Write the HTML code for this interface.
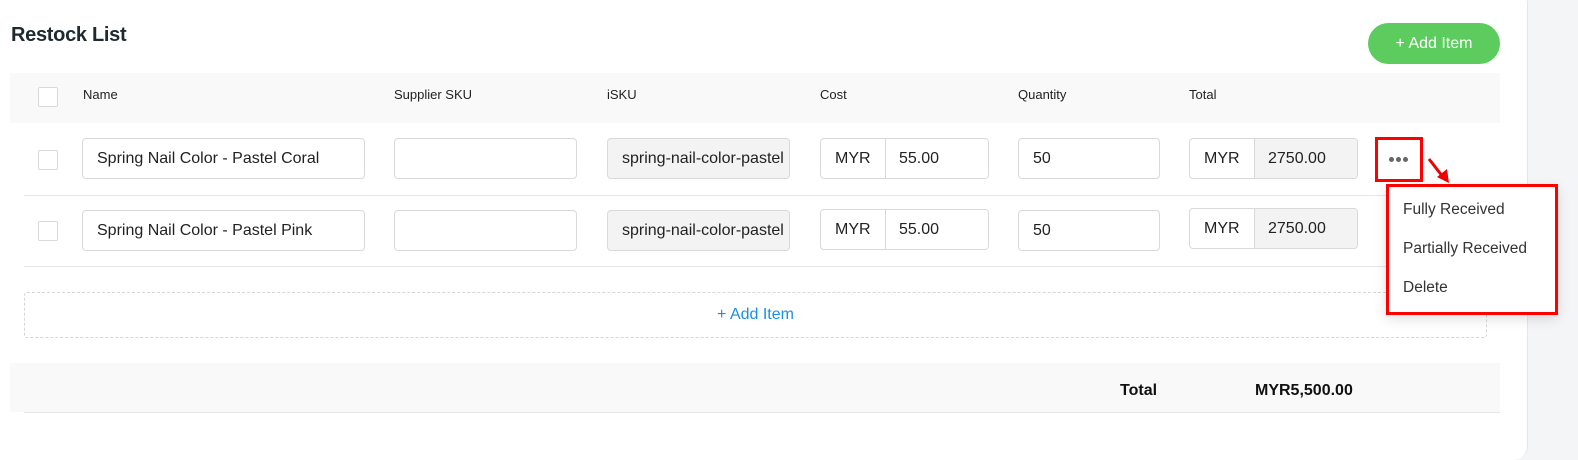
<!DOCTYPE html><html><head><style>
*{box-sizing:border-box;margin:0;padding:0}
body{width:1578px;height:445px;background:#f4f5f7;font-family:"Liberation Sans",sans-serif;position:relative;overflow:hidden;color:#222}
.a{position:absolute}
.card{left:0;top:-10px;width:1528px;height:470px;background:#fff;border-radius:0 14px 14px 0;border-right:1px solid #e6e6e6}
.th{font-size:13px;color:#222;top:87px}
.cb{width:20px;height:20px;border:1px solid #d9d9d9;border-radius:2px;background:#fff}
.in{height:41px;border:1px solid #d9d9d9;border-radius:4px;background:#fff;font-size:16px;color:#222;line-height:39px;padding-left:14px;overflow:hidden;white-space:nowrap}
.g{background:#f3f3f3}
.sp{position:absolute;top:0;bottom:0;border-left:1px solid #d9d9d9;background:#f3f3f3;padding-left:13px}
.sp.w{background:#fff}
.hl{height:1px;background:#e6e6e6}
.mi{left:1403px;font-size:15.5px;color:#333}
.d{position:absolute;width:5px;height:5px;border-radius:50%;background:#666;top:157px}
</style></head><body>
<div class="a card"></div>
<div class="a" style="left:11px;top:24px;font-size:20px;font-weight:bold;color:#1e2a2e;letter-spacing:-0.3px">Restock List</div>
<div class="a" style="left:1368px;top:23px;width:132px;height:41px;border-radius:21px;background:#5bcc5d;color:#fff;font-size:16px;line-height:41px;text-align:center">+ Add Item</div>
<div class="a" style="left:10px;top:73px;width:1490px;height:50px;background:#f9f9f9"></div>
<div class="a cb" style="left:38px;top:87px"></div>
<div class="a th" style="left:83px">Name</div>
<div class="a th" style="left:394px">Supplier SKU</div>
<div class="a th" style="left:607px">iSKU</div>
<div class="a th" style="left:820px">Cost</div>
<div class="a th" style="left:1018px">Quantity</div>
<div class="a th" style="left:1189px">Total</div>

<div class="a cb" style="left:38px;top:150px"></div>
<div class="a in" style="left:82px;top:138px;width:283px">Spring Nail Color - Pastel Coral</div>
<div class="a in" style="left:394px;top:138px;width:183px"></div>
<div class="a in g" style="left:607px;top:138px;width:183px">spring-nail-color-pastel</div>
<div class="a in" style="left:820px;top:138px;width:169px">MYR<div class="sp w" style="left:64px;right:0">55.00</div></div>
<div class="a in" style="left:1018px;top:138px;width:142px">50</div>
<div class="a in" style="left:1189px;top:138px;width:169px">MYR<div class="sp" style="left:64px;right:0">2750.00</div></div>
<div class="a hl" style="left:24px;top:195px;width:1476px"></div>

<div class="a cb" style="left:38px;top:221px"></div>
<div class="a in" style="left:82px;top:210px;width:283px">Spring Nail Color - Pastel Pink</div>
<div class="a in" style="left:394px;top:210px;width:183px"></div>
<div class="a in g" style="left:607px;top:210px;width:183px">spring-nail-color-pastel</div>
<div class="a in" style="left:820px;top:209px;width:169px">MYR<div class="sp w" style="left:64px;right:0">55.00</div></div>
<div class="a in" style="left:1018px;top:210px;width:142px">50</div>
<div class="a in" style="left:1189px;top:208px;width:169px">MYR<div class="sp" style="left:64px;right:0">2750.00</div></div>
<div class="a hl" style="left:24px;top:266px;width:1476px"></div>

<div class="a" style="left:24px;top:292px;width:1463px;height:46px;border:1px dashed #d6d6d6;border-radius:3px;text-align:center;line-height:44px;color:#1a8fe3;font-size:16px">+ Add Item</div>

<div class="a" style="left:10px;top:363px;width:1490px;height:49px;background:#f9f9f9"></div>
<div class="a hl" style="left:24px;top:412px;width:1476px"></div>
<div class="a" style="left:1120px;top:382px;font-size:16px;font-weight:bold;color:#111">Total</div>
<div class="a" style="left:1255px;top:382px;font-size:16px;font-weight:bold;color:#111">MYR5,500.00</div>

<div class="a" style="left:1375px;top:137px;width:48px;height:45px;border:3px solid #f00"></div>
<div class="d" style="left:1389px"></div><div class="d" style="left:1396px"></div><div class="d" style="left:1403px"></div>
<svg class="a" style="left:1425px;top:155px" width="30" height="32"><line x1="4" y1="4" x2="18" y2="22" stroke="#e00" stroke-width="3"/><polygon points="12,22 24,28 22,14" fill="#e00"/></svg>
<div class="a" style="left:1386px;top:184px;width:172px;height:131px;border:3px solid #f00;background:#fff;box-shadow:0 4px 12px rgba(0,0,0,.12)"></div>
<div class="a mi" style="top:201px">Fully Received</div>
<div class="a mi" style="top:240px">Partially Received</div>
<div class="a mi" style="top:279px">Delete</div>
</body></html>
